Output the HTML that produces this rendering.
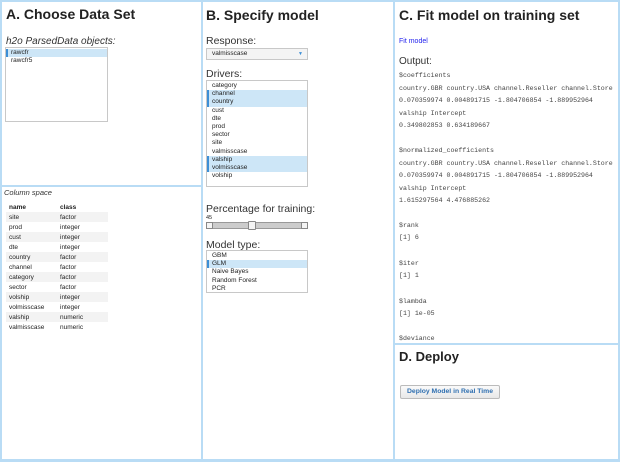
<!DOCTYPE html>
<html><head><style>
*{margin:0;padding:0;box-sizing:border-box}
body{width:620px;height:462px;background:#fff;position:relative;overflow:hidden;font-family:"Liberation Sans",sans-serif;color:#222}
.a{position:absolute}
.vl{position:absolute;background:#b9dcf5;width:2px}
.hl{position:absolute;background:#b9dcf5;height:2px}
h1{position:absolute;font-size:14px;font-weight:bold;color:#222;white-space:nowrap}
.lbl{position:absolute;font-size:10.5px;color:#333;white-space:nowrap}
.box{position:absolute;border:1px solid #c8c8c8;background:#fff}
.row{height:8.2px;font-size:6.5px;line-height:8.2px;padding-left:5px;white-space:nowrap}
.sel{background:#cde6f7;border-left:2px solid #3d8fd6;padding-left:3px}
.mono{position:absolute;left:399px;font-family:"Liberation Mono",monospace;font-size:6.6px;color:#444;white-space:nowrap}
table{border-collapse:collapse;font-size:6.5px}
td{height:10px;padding-left:3px}
tr:nth-child(even) td{background:#f3f3f3}
</style></head><body>
<div class="vl" style="left:0;top:0;height:462px"></div>
<div class="vl" style="left:201px;top:0;height:462px"></div>
<div class="vl" style="left:393px;top:0;height:462px"></div>
<div class="vl" style="left:618px;top:0;height:462px"></div>
<div class="hl" style="left:0;top:0;width:620px"></div>
<div class="hl" style="left:0;top:459px;width:620px;height:3px"></div>
<div class="hl" style="left:0;top:185px;width:202px"></div>
<div class="hl" style="left:394px;top:343px;width:226px"></div>

<h1 style="left:6px;top:6px">A. Choose Data Set</h1>
<div class="lbl" style="left:6px;top:36px;font-style:italic;font-size:10px">h2o ParsedData objects:</div>
<div class="box" style="left:5px;top:47px;width:103px;height:75px;padding-top:1px">
<div class="row sel">rawcfr</div><div class="row">rawcfr5</div></div>

<div class="lbl" style="left:4px;top:188px;font-style:italic;font-size:7.5px">Column space</div>
<table class="a" style="left:6px;top:202px;width:102px">
<tr><td style="font-weight:bold;height:9px;background:#fff">name</td><td style="font-weight:bold;background:#fff">class</td></tr>
<tr><td style="width:51px">site</td><td>factor</td></tr>
<tr><td>prod</td><td>integer</td></tr>
<tr><td>cust</td><td>integer</td></tr>
<tr><td>dte</td><td>integer</td></tr>
<tr><td>country</td><td>factor</td></tr>
<tr><td>channel</td><td>factor</td></tr>
<tr><td>category</td><td>factor</td></tr>
<tr><td>sector</td><td>factor</td></tr>
<tr><td>volship</td><td>integer</td></tr>
<tr><td>volmisscase</td><td>integer</td></tr>
<tr><td>valship</td><td>numeric</td></tr>
<tr><td>valmisscase</td><td>numeric</td></tr>
</table>

<h1 style="left:206px;top:7px">B. Specify model</h1>
<div class="lbl" style="left:206px;top:35px">Response:</div>
<div class="box" style="left:206px;top:48px;width:102px;height:12px;background:#f4f4f4;font-size:6.5px;line-height:10px;padding-left:5px">valmisscase<span style="position:absolute;right:4px;top:0;color:#3d8fd6;font-size:5px">▼</span></div>
<div class="lbl" style="left:206px;top:68px">Drivers:</div>
<div class="box" style="left:206px;top:80px;width:102px;height:107px;padding-top:1px">
<div class="row">category</div><div class="row sel">channel</div><div class="row sel">country</div><div class="row">cust</div><div class="row">dte</div><div class="row">prod</div><div class="row">sector</div><div class="row">site</div><div class="row">valmisscase</div><div class="row sel">valship</div><div class="row sel">volmisscase</div><div class="row">volship</div></div>
<div class="lbl" style="left:206px;top:203px">Percentage for training:</div>
<div class="a" style="left:206px;top:215px;font-size:5.5px">45</div>
<div class="a" style="left:206px;top:222px;width:102px;height:7px;background:#ccc;border:1px solid #999"></div>
<div class="a" style="left:206px;top:222px;width:7px;height:7px;background:#f4f4f4;border:1px solid #888"></div>
<div class="a" style="left:301px;top:222px;width:7px;height:7px;background:#f4f4f4;border:1px solid #888"></div>
<div class="a" style="left:248px;top:221px;width:8px;height:9px;background:#f4f4f4;border:1px solid #888;border-radius:1px"></div>
<div class="lbl" style="left:206px;top:239px">Model type:</div>
<div class="box" style="left:206px;top:250px;width:102px;height:43px;padding-top:1px">
<div class="row">GBM</div><div class="row sel">GLM</div><div class="row">Naive Bayes</div><div class="row">Random Forest</div><div class="row">PCR</div></div>

<h1 style="left:399px;top:7px">C. Fit model on training set</h1>
<div class="a" style="left:399px;top:38px;font-size:7px;color:#2222ee">Fit model</div>
<div class="lbl" style="left:399px;top:56px;font-size:10px">Output:</div>
<div class="mono" style="top:72px">$coefficients</div>
<div class="mono" style="top:85px">country.GBR country.USA channel.Reseller channel.Store</div>
<div class="mono" style="top:97px">0.070359974 0.004891715 -1.804706854 -1.889952964</div>
<div class="mono" style="top:110px">valship Intercept</div>
<div class="mono" style="top:122px">0.349802853 0.634189667</div>
<div class="mono" style="top:147px">$normalized_coefficients</div>
<div class="mono" style="top:160px">country.GBR country.USA channel.Reseller channel.Store</div>
<div class="mono" style="top:172px">0.070359974 0.004891715 -1.804706854 -1.889952964</div>
<div class="mono" style="top:185px">valship Intercept</div>
<div class="mono" style="top:197px">1.615297564 4.476885262</div>
<div class="mono" style="top:222px">$rank</div>
<div class="mono" style="top:234px">[1] 6</div>
<div class="mono" style="top:260px">$iter</div>
<div class="mono" style="top:272px">[1] 1</div>
<div class="mono" style="top:298px">$lambda</div>
<div class="mono" style="top:310px">[1] 1e-05</div>
<div class="mono" style="top:335px">$deviance</div>

<h1 style="left:399px;top:349px;font-size:13px">D. Deploy</h1>
<div class="a" style="left:400px;top:385px;width:100px;height:14px;border:1px solid #bbb;border-radius:2px;background:linear-gradient(#fafafa,#e8e8e8);font-size:6.8px;font-weight:bold;color:#2f6fb0;line-height:12px;text-align:center">Deploy Model in Real Time</div>
</body></html>
